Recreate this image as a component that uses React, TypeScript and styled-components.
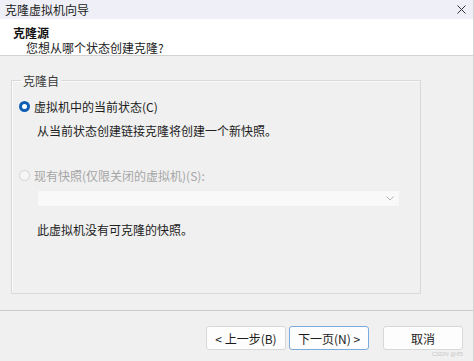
import styled, { createGlobalStyle } from "styled-components";

const GlobalStyle = createGlobalStyle`
  html, body {
    margin: 0;
    padding: 0;
    width: 474px;
    height: 361px;
    overflow: hidden;
    background: #f0f0f0;
  }
  body {
    font-family: "Noto Sans CJK SC", "Noto Sans", sans-serif;
    font-size: 12px;
    color: #1b1b1b;
  }
`;

const Window = styled.div`
  position: relative;
  width: 473px;
  height: 361px;
  display: flex;
  flex-direction: column;
  background: #f0f0f0;
  border-right: 1px solid #d6d6d6;
`;

const TitleBar = styled.div`
  height: 19px;
  display: flex;
  align-items: center;
  justify-content: space-between;
  padding: 0 7px 0 5px;
  background: #eff0f7;
  font-size: 12px;
  line-height: 19px;
  color: #222;
`;

const Header = styled.div`
  height: 36px;
  background: #ffffff;
  border-bottom: 1px solid #d2d2d2;
  padding: 6px 0 0 13px;
  box-sizing: border-box;
  height: 37px;
`;

const HeaderTitle = styled.div`
  font-weight: bold;
  line-height: 15px;
  color: #111;
`;

const HeaderSub = styled.div`
  line-height: 15px;
  padding-left: 13px;
  color: #222;
`;

const Body = styled.div`
  flex: 1;
  padding: 17px 0 0 11px;
`;

const Group = styled.fieldset`
  width: 410px;
  height: 221px;
  box-sizing: border-box;
  margin: 0;
  padding: 0 0 0 7px;
  border: 1px solid #d9d9d9;
  box-shadow: inset 1px 1px 0 #fafafa;
`;

const Legend = styled.legend`
  padding: 0 2px;
  margin-left: 2px;
  line-height: 15px;
  color: #3a3a3a;
`;

const RadioRow = styled.div<{ $top: number; $disabled?: boolean }>`
  display: flex;
  align-items: center;
  gap: 4px;
  height: 16px;
  margin-top: ${(p) => p.$top}px;
  color: ${(p) => (p.$disabled ? "#a6a6a6" : "#1b1b1b")};
`;

const RadioDot = styled.span<{ $checked?: boolean }>`
  width: 11px;
  height: 11px;
  border-radius: 50%;
  box-sizing: border-box;
  flex: none;
  background: ${(p) => (p.$checked ? "#ffffff" : "#f6f6f6")};
  border: ${(p) => (p.$checked ? "3px solid #0f5fb4" : "1px solid #d4d4d4")};
`;

const Note = styled.div<{ $top: number }>`
  margin-top: ${(p) => p.$top}px;
  padding-left: 18px;
  line-height: 16px;
  color: #222;
`;

const Select = styled.div`
  margin: 7px 0 0 18px;
  width: 363px;
  height: 17px;
  box-sizing: border-box;
  background: #f9f9f9;
  border: 1px solid #efefef;
  display: flex;
  align-items: center;
  justify-content: flex-end;
  padding-right: 5px;
`;

const Footer = styled.div`
  height: 51px;
  box-sizing: border-box;
  border-top: 1px solid #cacaca;
  display: flex;
  justify-content: flex-end;
  align-items: flex-start;
  padding: 15px 10px 0 0;
`;

const Button = styled.button<{ $primary?: boolean; $gap: number }>`
  width: 80px;
  height: 24px;
  margin-left: ${(p) => p.$gap}px;
  background: #fdfdfd;
  border: 1px solid ${(p) => (p.$primary ? "#7aaade" : "#d8d8d8")};
  border-radius: 3px;
  font-family: "Noto Sans CJK SC", "Noto Sans", sans-serif;
  font-size: 12px;
  color: #1b1b1b;
  padding: 0;
`;

const Watermark = styled.div`
  position: absolute;
  right: 10px;
  bottom: 4px;
  font-family: "Liberation Sans", sans-serif;
  font-size: 6px;
  color: #c8c8c8;
`;

export default function App() {
  return (
    <>
      <GlobalStyle />
      <Window>
        <TitleBar>
          <span>克隆虚拟机向导</span>
          <svg width="9" height="9" viewBox="0 0 9 9">
            <path d="M0.5 0.5 L8.5 8.5 M8.5 0.5 L0.5 8.5" stroke="#333" strokeWidth="1" />
          </svg>
        </TitleBar>
        <Header>
          <HeaderTitle>克隆源</HeaderTitle>
          <HeaderSub>您想从哪个状态创建克隆?</HeaderSub>
        </Header>
        <Body>
          <Group>
            <Legend>克隆自</Legend>
            <RadioRow $top={10}>
              <RadioDot $checked />
              <span>虚拟机中的当前状态(C)</span>
            </RadioRow>
            <Note $top={9}>从当前状态创建链接克隆将创建一个新快照。</Note>
            <RadioRow $top={28} $disabled>
              <RadioDot />
              <span>现有快照(仅限关闭的虚拟机)(S):</span>
            </RadioRow>
            <Select>
              <svg width="8" height="5" viewBox="0 0 8 5">
                <path d="M0.5 0.5 L4 4 L7.5 0.5" stroke="#b5b5b5" fill="none" strokeWidth="1" />
              </svg>
            </Select>
            <Note $top={15}>此虚拟机没有可克隆的快照。</Note>
          </Group>
        </Body>
        <Footer>
          <Button $gap={0}>&lt; 上一步(B)</Button>
          <Button $gap={3} $primary>下一页(N) &gt;</Button>
          <Button $gap={14}>取消</Button>
        </Footer>
        <Watermark>CSDN @ff5</Watermark>
      </Window>
    </>
  );
}
